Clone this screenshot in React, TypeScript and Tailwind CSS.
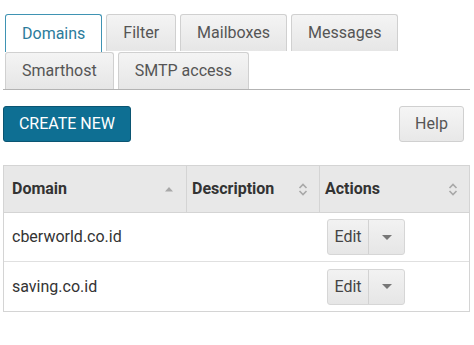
import React from "react";

const tabs = [
  { label: "Domains", active: true },
  { label: "Filter" },
  { label: "Mailboxes" },
  { label: "Messages" },
  { label: "Smarthost" },
  { label: "SMTP access" },
];

const domains = ["cberworld.co.id", "saving.co.id"];

function SortUp() {
  return (
    <svg width="10" height="6" viewBox="0 0 10 6" className="shrink-0">
      <path d="M1 5.5 L5 1 L9 5.5 Z" fill="#a8a8a8" />
    </svg>
  );
}

function SortBoth() {
  return (
    <svg width="10" height="13" viewBox="0 0 10 13" className="shrink-0">
      <path
        d="M1.5 5 L5 1.5 L8.5 5 M1.5 8 L5 11.5 L8.5 8"
        fill="none"
        stroke="#a8a8a8"
        strokeWidth="1.6"
      />
    </svg>
  );
}

function EditButton() {
  return (
    <div className="flex h-[36px] w-[78px] rounded-[3px] border border-[#d6d6d6] bg-gradient-to-b from-[#f2f2f2] to-[#e6e6e6]">
      <span className="flex w-[41px] items-center justify-center border-r border-[#d2d2d2] text-[16px] text-[#444]">
        Edit
      </span>
      <span className="flex flex-1 items-center justify-center">
        <svg width="10" height="5" viewBox="0 0 10 5">
          <path d="M0 0 L10 0 L5 5 Z" fill="#777" />
        </svg>
      </span>
    </div>
  );
}

export default function App() {
  return (
    <div className="h-[345px] w-[474px] bg-white px-[3px] pr-[4px] font-['Roboto',sans-serif]">
      {/* tabs */}
      <div className="flex flex-wrap gap-x-[4px] gap-y-[1px] border-b border-[#b3b3b3] pt-[14px] pl-[2px]">
        {tabs.map((t) => (
          <div
            key={t.label}
            className={
              t.active
                ? "-mb-px flex h-[38px] items-center rounded-t-[3px] border border-b-0 border-[#3f93b3] bg-white px-4 text-[16px] text-[#2b7b9b]"
                : "flex h-[37px] items-center rounded-t-[3px] border border-b-0 border-[#d0d0d0] bg-gradient-to-b from-[#f4f4f4] to-[#e6e6e6] px-4 text-[16px] text-[#555]"
            }
          >
            {t.label}
          </div>
        ))}
      </div>

      {/* toolbar */}
      <div className="mt-[16px] flex items-center justify-between pr-[6px]">
        <button className="h-[36px] w-[128px] rounded-[3px] border border-[#0b5572] bg-[#0e6f93] text-[16px] text-white">
          CREATE NEW
        </button>
        <button className="h-[36px] w-[65px] rounded-[3px] border border-[#d0d0d0] bg-gradient-to-b from-[#f5f5f5] to-[#e8e8e8] text-[16px] text-[#555]">
          Help
        </button>
      </div>

      {/* table */}
      <div className="mt-[23px] border border-[#d4d4d4]">
        <div className="flex h-[47px] border-b border-[#d4d4d4] bg-[#e8e8e8] text-[16px] font-bold text-[#333]">
          <div className="flex w-[183px] items-center justify-between border-r border-[#d4d4d4] pl-[8px] pr-[12px]">
            <span>Domain</span>
            <SortUp />
          </div>
          <div className="flex w-[133px] items-center justify-between border-r border-[#d4d4d4] pl-[5px] pr-[11px]">
            <span>Description</span>
            <SortBoth />
          </div>
          <div className="flex flex-1 items-center justify-between pl-[5px] pr-[11px]">
            <span>Actions</span>
            <SortBoth />
          </div>
        </div>
        {domains.map((d, i) => (
          <div
            key={d}
            className={
              "flex h-[49px] items-center text-[16px] text-[#333] " +
              (i < domains.length - 1 ? "border-b border-[#e0e0e0]" : "")
            }
          >
            <div className="w-[183px] pl-[8px]">{d}</div>
            <div className="w-[133px]" />
            <div className="flex-1 pl-[7px]">
              <EditButton />
            </div>
          </div>
        ))}
      </div>
    </div>
  );
}
